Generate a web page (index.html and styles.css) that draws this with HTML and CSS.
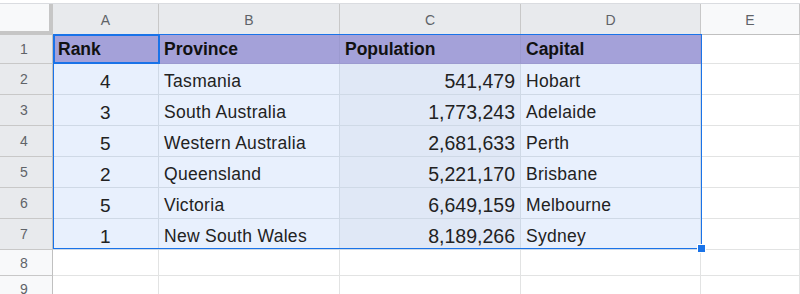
FILE: index.html
```html
<!DOCTYPE html>
<html>
<head>
<meta charset="utf-8">
<link rel="stylesheet" href="styles.css">
</head>
<body>
<div class="sheet">
  <div class="grid">
    <div class="corner"></div>
    <div class="colhead sel">A</div>
    <div class="colhead sel">B</div>
    <div class="colhead sel">C</div>
    <div class="colhead sel">D</div>
    <div class="colhead">E</div>

    <div class="rowhead sel r1">1</div>
    <div class="cell hdr r1">Rank</div>
    <div class="cell hdr r1">Province</div>
    <div class="cell hdr r1">Population</div>
    <div class="cell hdr r1">Capital</div>
    <div class="cell r1"></div>

    <div class="rowhead sel">2</div>
    <div class="cell data center">4</div>
    <div class="cell data">Tasmania</div>
    <div class="cell data num">541,479</div>
    <div class="cell data">Hobart</div>
    <div class="cell"></div>

    <div class="rowhead sel">3</div>
    <div class="cell data center">3</div>
    <div class="cell data">South Australia</div>
    <div class="cell data num">1,773,243</div>
    <div class="cell data">Adelaide</div>
    <div class="cell"></div>

    <div class="rowhead sel">4</div>
    <div class="cell data center">5</div>
    <div class="cell data">Western Australia</div>
    <div class="cell data num">2,681,633</div>
    <div class="cell data">Perth</div>
    <div class="cell"></div>

    <div class="rowhead sel">5</div>
    <div class="cell data center">2</div>
    <div class="cell data">Queensland</div>
    <div class="cell data num">5,221,170</div>
    <div class="cell data">Brisbane</div>
    <div class="cell"></div>

    <div class="rowhead sel">6</div>
    <div class="cell data center">5</div>
    <div class="cell data">Victoria</div>
    <div class="cell data num">6,649,159</div>
    <div class="cell data">Melbourne</div>
    <div class="cell"></div>

    <div class="rowhead sel">7</div>
    <div class="cell data center">1</div>
    <div class="cell data">New South Wales</div>
    <div class="cell data num">8,189,266</div>
    <div class="cell data">Sydney</div>
    <div class="cell"></div>

    <div class="rowhead">8</div>
    <div class="cell"></div>
    <div class="cell"></div>
    <div class="cell"></div>
    <div class="cell"></div>
    <div class="cell"></div>

    <div class="rowhead">9</div>
    <div class="cell"></div>
    <div class="cell"></div>
    <div class="cell"></div>
    <div class="cell"></div>
    <div class="cell"></div>
  </div>
  <div class="selection"></div>
  <div class="active"></div>
  <div class="handle"></div>
</div>
</body>
</html>
```
FILE: styles.css
```css
* { box-sizing: border-box; }
html, body { margin: 0; padding: 0; background: #fff; }
body { width: 800px; height: 294px; overflow: hidden; font-family: "Liberation Sans", Arial, sans-serif; }

.sheet { position: relative; padding-top: 3px; }

.grid {
  display: grid;
  grid-template-columns: 53px 106px 181px 181px 180px 1fr;
  grid-template-rows: 31px 29px repeat(6, 31px) 26px 26px;
  border-top: 1px solid #dadce0;
}

.corner {
  background: #f8f9fa;
  border-right: 4px solid #c6c6c6;
  border-bottom: 4px solid #c6c6c6;
}

.colhead {
  background: #f8f9fa;
  border-right: 1px solid #c8c8c8;
  border-bottom: 1px solid #c0c0c0;
  color: #5f6368;
  font-size: 14px;
  display: flex;
  align-items: center;
  justify-content: center;
  padding-top: 2px;
}

.rowhead {
  background: #f8f9fa;
  border-right: 1px solid #c0c0c0;
  border-bottom: 1px solid #c8c8c8;
  color: #5f6368;
  font-size: 14px;
  display: flex;
  align-items: center;
  justify-content: center;
  padding-right: 4px;
}

.colhead.sel, .rowhead.sel { background: #e8eaed; }

.cell {
  border-right: 1px solid #e2e3e3;
  border-bottom: 1px solid #e2e3e3;
  color: #222;
  font-size: 17.5px;
  display: flex;
  align-items: flex-end;
  padding: 0 5px 2px 5px;
  white-space: nowrap;
}

.cell.data {
  background: #e8f0fd;
  border-color: #cfd9e6;
  letter-spacing: 0.3px;
}
.cell.data.num {
  background: #e0e8f6;
  justify-content: flex-end;
  letter-spacing: 0;
  font-size: 19.5px;
  padding-right: 5px;
  padding-bottom: 1px;
}
.cell.data.center {
  justify-content: center;
  font-size: 19px;
  padding-bottom: 1px;
}

.cell.hdr {
  background: #a4a1d9;
  border-color: #9c9ad0;
  font-weight: bold;
  color: #111;
  padding-bottom: 3px;
}

.selection {
  position: absolute;
  left: 53px;
  top: 34px;
  width: 649px;
  height: 215px;
  border: 1px solid #1a73e8;
  pointer-events: none;
}

.active {
  position: absolute;
  left: 53px;
  top: 34px;
  width: 107px;
  height: 30px;
  border: 2px solid #1a73e8;
  pointer-events: none;
}

.handle {
  position: absolute;
  left: 697px;
  top: 244px;
  width: 9px;
  height: 9px;
  background: #1a73e8;
  border: 1px solid #fff;
}
```
